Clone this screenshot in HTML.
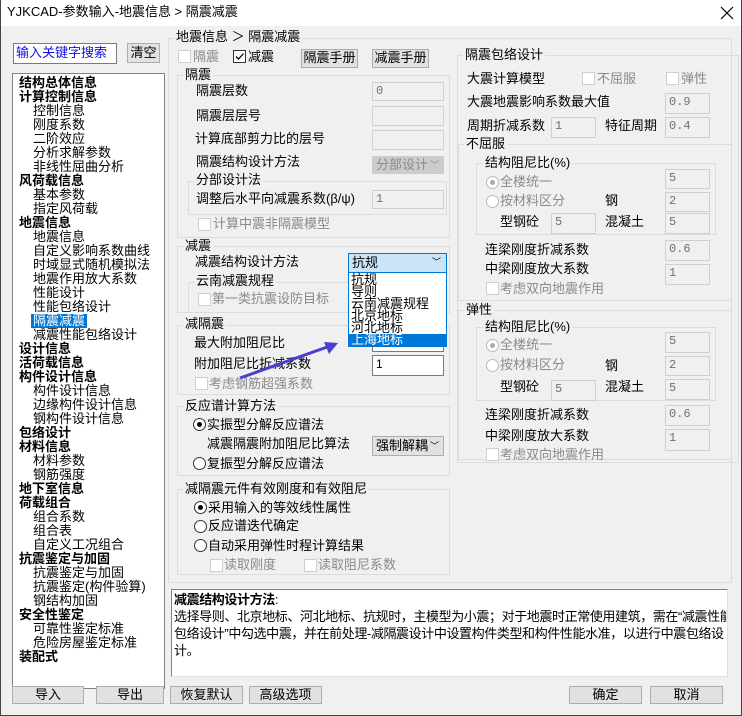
<!DOCTYPE html>
<html><head><meta charset="utf-8"><style>
*{margin:0;padding:0;box-sizing:border-box}
body{width:742px;height:716px;overflow:hidden;background:#f0f0f0;font-family:"Liberation Sans","Noto Sans CJK SC","WenQuanYi Zen Hei",sans-serif;font-size:13px;color:#000;position:relative}
.a{position:absolute;white-space:nowrap}
.t{position:absolute;white-space:nowrap;line-height:16px;height:16px}
.g{position:absolute;border:1px solid #dcdcdc}
.gl{position:absolute;background:#f0f0f0;padding:0 2px;line-height:16px;white-space:nowrap}
.in{position:absolute;border:1px solid #cfcfcf;background:#f0f0f0;color:#707070;font-family:"Liberation Mono",monospace;font-size:12px;padding-left:3px;line-height:17px}
.iw{position:absolute;border:1px solid #7a7a7a;background:#fff;font-size:12px;padding-left:3px;line-height:17px}
.btn{position:absolute;border:1px solid #adadad;background:#e1e1e1;text-align:center;line-height:16px}
.cb{position:absolute;width:13px;height:13px;border:1px solid #cfcfcf;background:#fff}
.rb{position:absolute;width:13px;height:13px;border:1px solid #333;border-radius:50%;background:#fff}
.dis{color:#8a8a8a}
.tr{position:absolute;left:6px;line-height:14px;height:14px;white-space:nowrap}
.b{font-weight:bold}
.c{left:20px}
</style></head><body>
<div class="a" style="left:0;top:0;width:742px;height:26px;background:#fff"></div>
<div class="t" style="left:7px;top:4px;font-size:13px">YJKCAD-参数输入-地震信息 &gt; 隔震减震</div>
<svg class="a" style="left:720px;top:6px" width="14" height="14"><path d="M1 1L13 13M13 1L1 13" stroke="#000" stroke-width="1.2"/></svg>
<div class="a" style="left:0;top:0;width:742px;height:716px;border:1px solid #444;border-top:none"></div>

<div class="a" style="left:13px;top:43px;width:104px;height:21px;border:1px solid #7a7a7a;background:#fff;color:#1010e0;line-height:18px;padding-left:2px">输入关键字搜索</div>
<div class="btn" style="left:127px;top:43px;width:33px;height:20px;line-height:18px">清空</div>

<div class="a" style="left:12px;top:73px;width:153px;height:616px;border:1px solid #828282;background:#fff;overflow:hidden">
<div style="position:relative;top:2px">
<div class="tr b" style="top:0">结构总体信息</div>
<div class="tr b" style="top:14px">计算控制信息</div>
<div class="tr c" style="top:28px">控制信息</div>
<div class="tr c" style="top:42px">刚度系数</div>
<div class="tr c" style="top:56px">二阶效应</div>
<div class="tr c" style="top:70px">分析求解参数</div>
<div class="tr c" style="top:84px">非线性屈曲分析</div>
<div class="tr b" style="top:98px">风荷载信息</div>
<div class="tr c" style="top:112px">基本参数</div>
<div class="tr c" style="top:126px">指定风荷载</div>
<div class="tr b" style="top:140px">地震信息</div>
<div class="tr c" style="top:154px">地震信息</div>
<div class="tr c" style="top:168px">自定义影响系数曲线</div>
<div class="tr c" style="top:182px">时域显式随机模拟法</div>
<div class="tr c" style="top:196px">地震作用放大系数</div>
<div class="tr c" style="top:210px">性能设计</div>
<div class="tr c" style="top:224px">性能包络设计</div>
<div class="tr c" style="top:238px;left:18px;background:#0078d7;color:#fff;padding:0 2px">隔震减震</div>
<div class="tr c" style="top:252px">减震性能包络设计</div>
<div class="tr b" style="top:266px">设计信息</div>
<div class="tr b" style="top:280px">活荷载信息</div>
<div class="tr b" style="top:294px">构件设计信息</div>
<div class="tr c" style="top:308px">构件设计信息</div>
<div class="tr c" style="top:322px">边缘构件设计信息</div>
<div class="tr c" style="top:336px">钢构件设计信息</div>
<div class="tr b" style="top:350px">包络设计</div>
<div class="tr b" style="top:364px">材料信息</div>
<div class="tr c" style="top:378px">材料参数</div>
<div class="tr c" style="top:392px">钢筋强度</div>
<div class="tr b" style="top:406px">地下室信息</div>
<div class="tr b" style="top:420px">荷载组合</div>
<div class="tr c" style="top:434px">组合系数</div>
<div class="tr c" style="top:448px">组合表</div>
<div class="tr c" style="top:462px">自定义工况组合</div>
<div class="tr b" style="top:476px">抗震鉴定与加固</div>
<div class="tr c" style="top:490px">抗震鉴定与加固</div>
<div class="tr c" style="top:504px">抗震鉴定(构件验算)</div>
<div class="tr c" style="top:518px">钢结构加固</div>
<div class="tr b" style="top:532px">安全性鉴定</div>
<div class="tr c" style="top:546px">可靠性鉴定标准</div>
<div class="tr c" style="top:560px">危险房屋鉴定标准</div>
<div class="tr b" style="top:574px">装配式</div>
</div></div>

<div class="g" style="left:168px;top:38px;width:564px;height:545px"></div>
<div class="gl" style="left:174px;top:29px">地震信息 ＞ 隔震减震</div>

<div class="cb" style="left:178px;top:50px"></div><div class="t dis" style="left:193px;top:49px">隔震</div>
<div class="cb" style="left:233px;top:50px;border-color:#333"></div>
<svg class="a" style="left:234px;top:51px" width="11" height="11"><path d="M2 5.5L4.5 8L9.5 2.5" stroke="#000" stroke-width="1.3" fill="none"/></svg>
<div class="t" style="left:248px;top:49px">减震</div>
<div class="btn" style="left:301px;top:49px;width:57px;height:19px">隔震手册</div>
<div class="btn" style="left:372px;top:49px;width:57px;height:19px">减震手册</div>

<div class="g" style="left:177px;top:75px;width:273px;height:163px"></div>
<div class="gl" style="left:183px;top:67px">隔震</div>
<div class="t" style="left:196px;top:83px">隔震层数</div><div class="in" style="left:372px;top:82px;width:72px;height:19px">0</div>
<div class="t" style="left:196px;top:108px">隔震层层号</div><div class="in" style="left:372px;top:106px;width:72px;height:20px"></div>
<div class="t" style="left:195px;top:131px">计算底部剪力比的层号</div><div class="in" style="left:372px;top:130px;width:72px;height:20px"></div>
<div class="t" style="left:196px;top:154px">隔震结构设计方法</div>
<div class="in" style="left:372px;top:156px;width:72px;height:18px;background:#cccccc;border-color:#ccc;color:#8a8a8a;font-family:inherit;font-size:13px;line-height:16px">分部设计<span style="position:absolute;right:4px;font-size:9px">﹀</span></div>
<div class="g" style="left:188px;top:181px;width:259px;height:34px"></div>
<div class="gl" style="left:194px;top:172px">分部设计法</div>
<div class="t" style="left:196px;top:191px">调整后水平向减震系数(β/ψ)</div><div class="in" style="left:372px;top:190px;width:72px;height:19px">1</div>
<div class="cb" style="left:198px;top:218px"></div><div class="t dis" style="left:213px;top:216px">计算中震非隔震模型</div>

<div class="g" style="left:177px;top:246px;width:273px;height:67px"></div>
<div class="gl" style="left:183px;top:238px">减震</div>
<div class="t" style="left:195px;top:254px">减震结构设计方法</div>
<div class="g" style="left:188px;top:282px;width:200px;height:31px"></div>
<div class="gl" style="left:194px;top:273px">云南减震规程</div>
<div class="cb" style="left:198px;top:293px"></div><div class="t dis" style="left:212px;top:291px">第一类抗震设防目标</div>

<div class="g" style="left:177px;top:325px;width:273px;height:70px"></div>
<div class="gl" style="left:183px;top:316px">减隔震</div>
<div class="t" style="left:194px;top:335px">最大附加阻尼比</div>
<div class="iw" style="left:372px;top:333px;width:72px;height:19px"></div>
<div class="t" style="left:194px;top:356px">附加阻尼比折减系数</div>
<div class="iw" style="left:372px;top:355px;width:72px;height:21px">1</div>
<div class="cb" style="left:195px;top:377px"></div><div class="t dis" style="left:209px;top:376px">考虑钢筋超强系数</div>

<svg class="a" style="left:230px;top:330px" width="120" height="60"><path d="M10 48L100 16" stroke="#4a3fd0" stroke-width="3"/><path d="M108 13L94 12L99 24Z" fill="#4a3fd0"/></svg>

<div class="g" style="left:177px;top:406px;width:273px;height:70px"></div>
<div class="gl" style="left:183px;top:398px">反应谱计算方法</div>
<div class="rb" style="left:193px;top:418px"></div><div class="a" style="left:197px;top:422px;width:5px;height:5px;border-radius:50%;background:#000"></div>
<div class="t" style="left:207px;top:417px">实振型分解反应谱法</div>
<div class="t" style="left:207px;top:436px">减震隔震附加阻尼比算法</div>
<div class="btn" style="left:372px;top:436px;width:72px;height:20px;line-height:18px;text-align:left;padding-left:3px">强制解耦<span style="position:absolute;right:4px;font-size:9px">﹀</span></div>
<div class="rb" style="left:193px;top:457px"></div><div class="t" style="left:207px;top:456px">复振型分解反应谱法</div>

<div class="g" style="left:177px;top:489px;width:273px;height:86px"></div>
<div class="gl" style="left:183px;top:481px">减隔震元件有效刚度和有效阻尼</div>
<div class="rb" style="left:194px;top:501px"></div><div class="a" style="left:198px;top:505px;width:5px;height:5px;border-radius:50%;background:#000"></div>
<div class="t" style="left:208px;top:500px">采用输入的等效线性属性</div>
<div class="rb" style="left:194px;top:520px"></div><div class="t" style="left:208px;top:518px">反应谱迭代确定</div>
<div class="rb" style="left:194px;top:539px"></div><div class="t" style="left:208px;top:538px">自动采用弹性时程计算结果</div>
<div class="cb" style="left:210px;top:559px"></div><div class="t dis" style="left:224px;top:557px">读取刚度</div>
<div class="cb" style="left:304px;top:559px"></div><div class="t dis" style="left:318px;top:557px">读取阻尼系数</div>

<div class="a" style="left:348px;top:253px;width:99px;height:20px;border:1px solid #0078d7;background:#cce4f7;line-height:17px;padding-left:3px">抗规<span style="position:absolute;right:5px;font-size:9px">﹀</span></div>
<div class="a" style="left:348px;top:272px;width:99px;height:75px;border:1px solid #0078d7;background:#fff;line-height:12px;padding-top:1px">
<div style="padding-left:2px">抗规</div><div style="padding-left:2px">导则</div><div style="padding-left:2px">云南减震规程</div><div style="padding-left:2px">北京地标</div><div style="padding-left:2px">河北地标</div><div style="padding-left:2px;background:#0078d7;color:#fff;height:13px">上海地标</div>
</div>

<div class="g" style="left:457px;top:55px;width:282px;height:408px"></div>
<div class="gl" style="left:463px;top:47px">隔震包络设计</div>
<div class="t" style="left:467px;top:71px">大震计算模型</div>
<div class="cb" style="left:582px;top:72px"></div><div class="t dis" style="left:597px;top:71px">不屈服</div>
<div class="cb" style="left:666px;top:72px"></div><div class="t dis" style="left:681px;top:71px">弹性</div>
<div class="t" style="left:467px;top:94px">大震地震影响系数最大值</div><div class="in" style="left:665px;top:93px;width:45px;height:21px">0.9</div>
<div class="t" style="left:467px;top:118px">周期折减系数</div><div class="in" style="left:551px;top:117px;width:45px;height:21px">1</div>
<div class="t" style="left:605px;top:118px">特征周期</div><div class="in" style="left:665px;top:117px;width:45px;height:21px">0.4</div>

<div class="g" style="left:458px;top:144px;width:274px;height:157px"></div>
<div class="gl" style="left:464px;top:136px">不屈服</div>
<div class="g" style="left:476px;top:163px;width:240px;height:72px"></div>
<div class="gl" style="left:483px;top:155px">结构阻尼比(%)</div>
<div class="rb" style="left:486px;top:176px;border-color:#bbb"></div><div class="a" style="left:490px;top:180px;width:5px;height:5px;border-radius:50%;background:#aaa"></div>
<div class="t dis" style="left:500px;top:174px">全楼统一</div><div class="in" style="left:665px;top:169px;width:45px;height:20px">5</div>
<div class="rb" style="left:486px;top:195px;border-color:#bbb"></div><div class="t dis" style="left:500px;top:193px">按材料区分</div>
<div class="t" style="left:605px;top:193px">钢</div><div class="in" style="left:665px;top:192px;width:45px;height:20px">2</div>
<div class="t" style="left:500px;top:214px">型钢砼</div><div class="in" style="left:551px;top:213px;width:45px;height:21px">5</div>
<div class="t" style="left:605px;top:214px">混凝土</div><div class="in" style="left:665px;top:213px;width:45px;height:21px">5</div>
<div class="t" style="left:485px;top:242px">连梁刚度折减系数</div><div class="in" style="left:665px;top:240px;width:45px;height:21px">0.6</div>
<div class="t" style="left:485px;top:261px">中梁刚度放大系数</div><div class="in" style="left:665px;top:264px;width:45px;height:21px">1</div>
<div class="cb" style="left:486px;top:282px"></div><div class="t dis" style="left:500px;top:281px">考虑双向地震作用</div>

<div class="g" style="left:458px;top:310px;width:274px;height:150px"></div>
<div class="gl" style="left:464px;top:302px">弹性</div>
<div class="g" style="left:476px;top:327px;width:240px;height:74px"></div>
<div class="gl" style="left:483px;top:319px">结构阻尼比(%)</div>
<div class="rb" style="left:486px;top:339px;border-color:#bbb"></div><div class="a" style="left:490px;top:343px;width:5px;height:5px;border-radius:50%;background:#aaa"></div>
<div class="t dis" style="left:500px;top:337px">全楼统一</div><div class="in" style="left:665px;top:332px;width:45px;height:21px">5</div>
<div class="rb" style="left:486px;top:359px;border-color:#bbb"></div><div class="t dis" style="left:500px;top:357px">按材料区分</div>
<div class="t" style="left:605px;top:358px">钢</div><div class="in" style="left:665px;top:356px;width:45px;height:20px">2</div>
<div class="t" style="left:500px;top:379px">型钢砼</div><div class="in" style="left:551px;top:380px;width:45px;height:21px">5</div>
<div class="t" style="left:605px;top:379px">混凝土</div><div class="in" style="left:665px;top:379px;width:45px;height:21px">5</div>
<div class="t" style="left:485px;top:407px">连梁刚度折减系数</div><div class="in" style="left:665px;top:405px;width:45px;height:21px">0.6</div>
<div class="t" style="left:485px;top:428px">中梁刚度放大系数</div><div class="in" style="left:665px;top:429px;width:45px;height:22px">1</div>
<div class="cb" style="left:486px;top:448px"></div><div class="t dis" style="left:500px;top:447px">考虑双向地震作用</div>

<div class="a" style="left:171px;top:589px;width:557px;height:88px;border:1px solid #828282;border-right-color:#e0e0e0;border-bottom-color:#e0e0e0;background:#fff;white-space:nowrap;overflow:hidden;line-height:17px;padding:1px 2px;font-size:13px;letter-spacing:-0.4px">
<b>减震结构设计方法</b>:<br>选择导则、北京地标、河北地标、抗规时，主模型为小震；对于地震时正常使用建筑，需在“减震性能<br>包络设计”中勾选中震，并在前处理-减隔震设计中设置构件类型和构件性能水准，以进行中震包络设<br>计。</div>

<div class="btn" style="left:12px;top:686px;width:72px;height:18px">导入</div>
<div class="btn" style="left:96px;top:686px;width:68px;height:18px">导出</div>
<div class="btn" style="left:170px;top:686px;width:73px;height:18px">恢复默认</div>
<div class="btn" style="left:249px;top:686px;width:73px;height:18px">高级选项</div>
<div class="btn" style="left:569px;top:686px;width:73px;height:18px">确定</div>
<div class="btn" style="left:650px;top:686px;width:73px;height:18px">取消</div>
</body></html>
